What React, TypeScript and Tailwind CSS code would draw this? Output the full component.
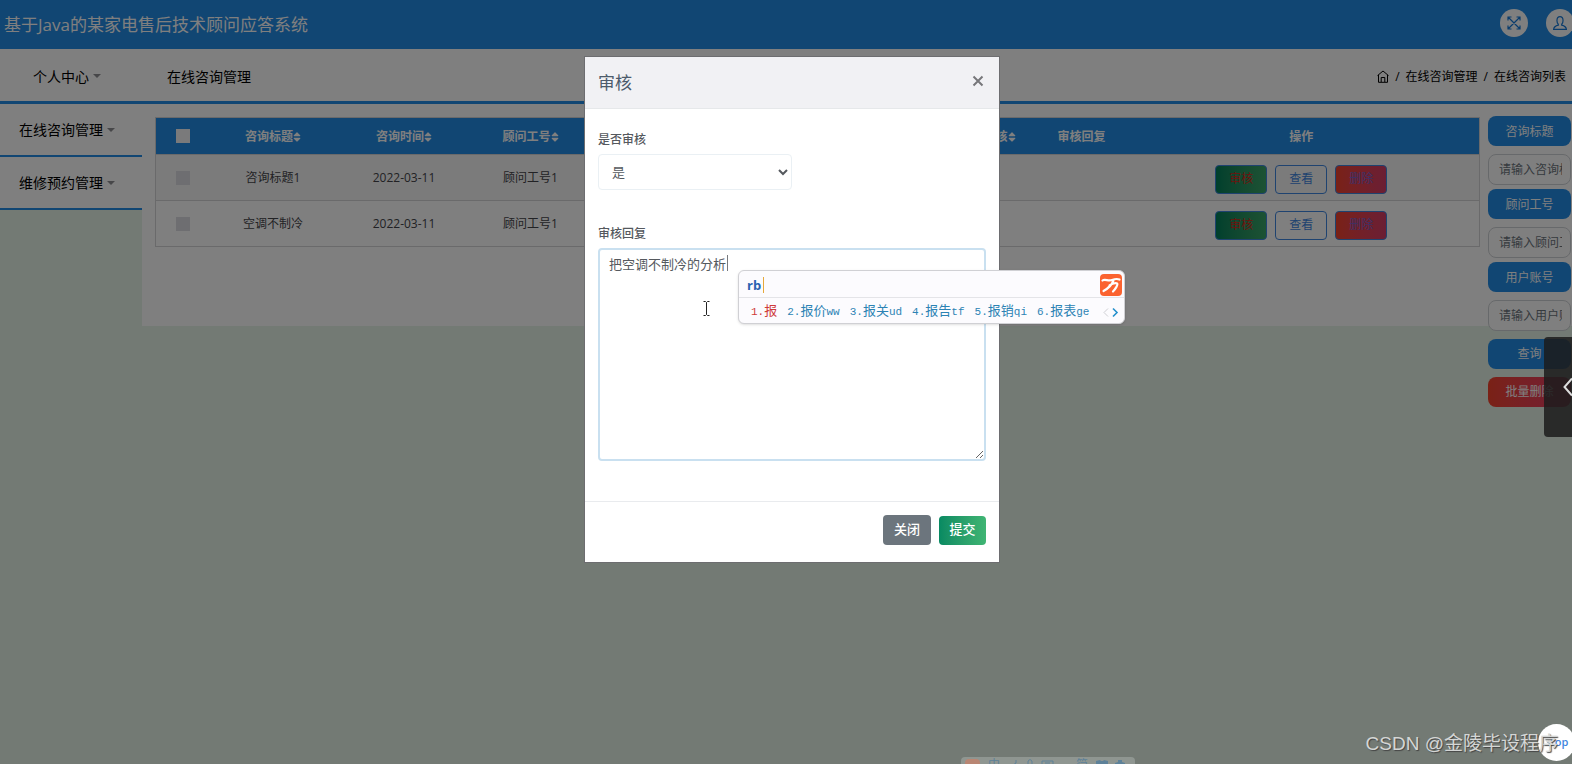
import { useState } from "react";
import { FaSort } from "react-icons/fa";

const MENU = ["在线咨询管理", "维修预约管理"];

const FILTERS = [
  { label: "咨询标题", placeholder: "请输入咨询标题" },
  { label: "顾问工号", placeholder: "请输入顾问工号" },
  { label: "用户账号", placeholder: "请输入用户账号" },
];

const ROWS = [
  { title: "咨询标题1", time: "2022-03-11", advisor: "顾问工号1" },
  { title: "空调不制冷", time: "2022-03-11", advisor: "顾问工号1" },
];

const CANDIDATES = [
  { word: "报", code: "" },
  { word: "报价", code: "ww" },
  { word: "报关", code: "ud" },
  { word: "报告", code: "tf" },
  { word: "报销", code: "qi" },
  { word: "报表", code: "ge" },
];

function Caret() {
  return (
    <span className="inline-block border-x-4 border-t-4 border-x-transparent border-t-[#8f8f93]" />
  );
}

function SortHeader({ children }: { children: string }) {
  return (
    <th className="pt-[2px] font-bold">
      <span className="inline-flex items-center">
        {children}
        <FaSort size={12} className="-mx-[2px]" />
      </span>
    </th>
  );
}

function ExpandIcon() {
  return (
    <svg width="14" height="14" viewBox="0 0 14 14" fill="none" stroke="currentColor" strokeWidth="1.200">
      <path d="M1 4.500V1h3.500M9.500 1H13v3.500M13 9.500V13H9.500M4.500 13H1V9.500M1 1l12 12M13 1L1 13" />
    </svg>
  );
}

function UserIcon() {
  return (
    <svg width="14" height="14" viewBox="0 0 14 14" fill="none" stroke="currentColor" strokeWidth="1.200">
      <path d="M5.300 8.200C4.200 7.300 3.900 5.600 4 4c.1-2 1.300-3.400 3-3.400S9.900 2 10 4c.1 1.600-.2 3.300-1.300 4.200v1c2.400.6 4.400 1.400 4.700 4.100H.6c.3-2.700 2.300-3.500 4.700-4.100z" />
    </svg>
  );
}

function HomeIcon() {
  return (
    <svg width="12" height="13" viewBox="0 0 12 13" fill="none" stroke="currentColor">
      <path d="M.5 5.600L6 1l5.500 4.600M1.500 5v7.300h9V5M4.200 12V7.500h3.600V12" />
    </svg>
  );
}

function ImeBar() {
  return (
    <div className="absolute bottom-0 left-[961px] flex h-[7px] w-[174px] items-start overflow-hidden rounded-t bg-[#8f9691] px-1 pt-px text-[12px] leading-[14px] text-[#5d8199]">
      <span className="mt-px h-3 w-[15px] rounded-sm bg-[#b98673]" />
      <span className="ml-2">中</span>
      <svg className="ml-3" width="44" height="8" viewBox="0 0 44 8" fill="none" stroke="currentColor">
        <path d="M4 2v3L1 7M16 7V4c0-3 4-3 4 0v3M30 8V3h11v5M33 5h5" />
      </svg>
      <span className="ml-5">简</span>
      <svg className="ml-2" width="32" height="8" viewBox="0 0 32 8" fill="currentColor">
        <path d="M0 3l4-1 1 1h2l1-1 4 1v5H0zM19 5l3-1V2h4v2l3 1v3H19z" />
      </svg>
    </div>
  );
}

function ImePopup() {
  return (
    <div className="absolute top-[270px] left-[738px] z-30 w-[387px] rounded-md border border-[#d0d0d4] bg-[#fcfbfe] shadow">
      <div className="flex h-[27px] items-center border-b border-[#e4e4e8] pt-[2px] pr-[2px] pl-2">
        <span className="border-r border-[#e6a93c] pr-[2px] text-[13px] leading-4 font-bold text-[#2a62b0]">rb</span>
        <svg className="ml-auto" width="22" height="22" viewBox="0 0 22 22">
          <rect width="22" height="22" rx="4" fill="#fb6330" />
          <path
            d="M2.500 6.500C5 4.500 8 7.500 12 6s5-1.500 7.500-.5M13.500 6.500C12 10.500 8 14.500 3.500 17M9.500 11.500c2-1.500 6-3 7.500-2s-2 6-4 8"
            fill="none"
            stroke="#fff"
            strokeWidth="2.200"
            strokeLinecap="round"
          />
        </svg>
      </div>
      <div className="flex h-[25px] items-center pt-[3px] pr-[5px] pl-3 font-['Liberation_Mono','Noto_Sans_CJK_SC',monospace] text-[11px] text-[#2c83b4]">
        <div className="flex gap-[10px]">
          {CANDIDATES.map((c, i) => (
            <span key={c.word} className={i === 0 ? "text-[#cf3a3a]" : ""}>
              {i + 1}.<span className="text-[13px]">{c.word}</span>
              {c.code}
            </span>
          ))}
        </div>
        <svg className="ml-auto" width="17" height="11" viewBox="0 0 17 11" fill="none">
          <path d="M6 1.500L2 5.500l4 4" stroke="#cfcfd4" />
          <path d="M11 1.500l4 4-4 4" stroke="#2490cc" strokeWidth="1.600" />
        </svg>
      </div>
    </div>
  );
}

function AuditModal() {
  const [status, setStatus] = useState("是");
  const [reply, setReply] = useState("把空调不制冷的分析");

  return (
    <div className="absolute inset-0 z-20 bg-black/50 pt-14 pl-3">
      <div role="dialog" aria-labelledby="audit-title" className="mx-auto w-[416px] border border-[#6d6d70] bg-white">
        <div className="flex h-[52px] items-center justify-between border-b border-[#e6e8ea] bg-[#f1f1f4] px-[13px]">
          <h5 id="audit-title" className="text-[17px] text-[#4d5b6b]">审核</h5>
          <button aria-label="Close" className="p-[2px] pb-[6px] text-[#77777a]">
            <svg width="12" height="12" viewBox="0 0 12 12" stroke="currentColor" strokeWidth="2">
              <path d="M1.500 1.500l9 9M10.500 1.500l-9 9" />
            </svg>
          </button>
        </div>

        <div className="px-[13px] pt-[21px] pb-10 text-[#55595e]">
          <label htmlFor="status" className="block text-[12px] leading-5 font-medium">是否审核</label>
          <select
            id="status"
            value={status}
            onChange={(e) => setStatus(e.target.value)}
            className="mt-1 block h-9 w-[194px] rounded-sm border border-[#eaf0f4] bg-white px-[9px] text-[13px]"
          >
            <option>是</option>
            <option>否</option>
          </select>
          <label htmlFor="reply" className="mt-[34px] block text-[12px] leading-5 font-medium">审核回复</label>
          <div className="relative mt-1">
            <textarea
              id="reply"
              value={reply}
              onChange={(e) => setReply(e.target.value)}
              className="block h-[213px] w-full resize rounded-sm border-2 border-[#c9e0f0] px-[9px] py-1 text-[13px] leading-5 outline-none"
            />
            <span className="absolute top-[7px] left-[129px] h-4 w-px bg-[#77797d]" />
          </div>
        </div>

        <div className="flex items-center justify-end gap-2 border-t border-[#e9ebee] px-[13px] pt-[13px] pb-[17px] text-[13px] text-white">
          <button className="h-[30px] w-12 rounded-sm bg-[#6c757d] font-medium">关闭</button>
          <button className="h-[29px] w-[47px] rounded-sm bg-linear-to-r from-[#078a62] to-[#3fb573] font-medium">提交</button>
        </div>
      </div>
    </div>
  );
}

export default function App() {
  return (
    <div className="relative flex min-h-screen flex-col overflow-hidden bg-[#e6f4e8] font-['Open_Sans','Noto_Sans_CJK_SC',sans-serif] text-black">
      <header className="flex h-[49px] items-center justify-between bg-[#228ce6] pl-1 text-white">
        <h1 className="text-[17px]">基于Java的某家电售后技术顾问应答系统</h1>
        <div className="-mr-[2px] flex gap-[18px] pb-[3px] text-[#1478d8]">
          <button aria-label="全屏" className="flex h-7 w-7 items-center justify-center rounded-full bg-white">
            <ExpandIcon />
          </button>
          <button aria-label="用户" className="flex h-7 w-7 items-center justify-center rounded-full bg-white">
            <UserIcon />
          </button>
        </div>
      </header>

      <nav className="flex h-[55px] items-center border-b-3 border-[#228ce6] bg-white pt-[2px] text-[14px]">
        <button className="flex w-[142px] items-center gap-1 pl-[33px]">
          个人中心
          <Caret />
        </button>
        <span className="pl-[25px]">在线咨询管理</span>
        <ol className="ml-auto flex items-center gap-[6px] pt-px pr-[6px] text-[12px]">
          <li><a href="#home" aria-label="首页"><HomeIcon /></a></li>
          <li>/</li>
          <li><a href="#manage">在线咨询管理</a></li>
          <li>/</li>
          <li>在线咨询列表</li>
        </ol>
      </nav>

      <div className="flex items-start">
        <aside className="w-[142px] shrink-0 text-[14px]">
          {MENU.map((item) => (
            <button
              key={item}
              className="flex h-[53px] w-full items-center gap-1 border-b-2 border-[#228ce6] bg-white pl-[19px]"
            >
              {item}
              <Caret />
            </button>
          ))}
        </aside>

        <main className="flex min-w-0 grow items-start gap-2 bg-white pt-3 pr-px pb-[79px] pl-[13px]">
          <table className="mt-px grow table-fixed border-collapse border border-[#d4d4d6] text-center text-[12px] text-[#45454a]">
            <colgroup>
              <col className="w-[55px]" />
              <col className="w-[125px]" />
              <col className="w-[137px]" />
              <col className="w-[116px]" />
              <col />
              <col className="w-[104px]" />
              <col className="w-[84px]" />
              <col className="w-[356px]" />
            </colgroup>
            <thead className="bg-[#228ce6] text-white">
              <tr className="h-[37px]">
                <th>
                  <input type="checkbox" aria-label="全选" className="mx-auto block h-[14px] w-[14px] appearance-none bg-[#f4f4f6]" />
                </th>
                <SortHeader>咨询标题</SortHeader>
                <SortHeader>咨询时间</SortHeader>
                <SortHeader>顾问工号</SortHeader>
                <th />
                <SortHeader>是否审核</SortHeader>
                <th className="pt-[2px]">审核回复</th>
                <th className="pt-[2px]">操作</th>
              </tr>
            </thead>
            <tbody>
              {ROWS.map((row) => (
                <tr key={row.title} className="h-[46px] border-t border-[#d4d4d6] odd:bg-[#f7f7f7]">
                  <td>
                    <input type="checkbox" aria-label={row.title} className="mx-auto block h-[14px] w-[14px] appearance-none bg-[#dcdce2]" />
                  </td>
                  <td>{row.title}</td>
                  <td>{row.time}</td>
                  <td>{row.advisor}</td>
                  <td />
                  <td />
                  <td />
                  <td>
                    <div className="flex justify-center gap-2 pt-[3px]">
                      <button className="h-[29px] w-[52px] rounded border border-[#3f86e0] bg-linear-to-r from-[#00805a] to-[#3aa568] text-[#d42a1c]">审核</button>
                      <button className="h-[29px] w-[52px] rounded border border-[#3f86e0] text-[#3f86e0]">查看</button>
                      <button className="h-[29px] w-[52px] rounded border border-[#3f86e0] bg-linear-to-r from-[#f4432c] to-[#d63d68] text-[#7a62cc]">删除</button>
                    </div>
                  </td>
                </tr>
              ))}
            </tbody>
          </table>

          <form className="-mb-44 flex w-[83px] shrink-0 flex-col text-[12px]">
            {FILTERS.map((f) => (
              <div key={f.label} className="mb-1 flex flex-col gap-2">
                <label htmlFor={f.label} className="h-[30px] rounded-lg bg-[#228ce6] text-center leading-[31px] text-white">
                  {f.label}
                </label>
                <input
                  id={f.label}
                  placeholder={f.placeholder}
                  className="h-[31px] w-full rounded-lg border border-[#cfd2d6] bg-white pr-2 pl-[10px] placeholder:text-[#6c757d]"
                />
              </div>
            ))}
            <button type="button" className="mt-1 h-[30px] rounded-lg bg-[#228ce6] text-white">查询</button>
            <button type="button" className="mt-2 h-[30px] rounded-lg bg-linear-to-r from-[#f4432c] to-[#e63d68] text-white">批量删除</button>
          </form>
        </main>
      </div>

      <AuditModal />

      <svg className="absolute top-[301px] left-[702px] z-30" width="9" height="15" viewBox="0 0 9 15" fill="none" stroke="#222">
        <path d="M1.500 .5h2l1 1 1-1h2M1.500 14.500h2l1-1 1 1h2M4.500 1.500v12" />
      </svg>
      <ImePopup />

      <button
        aria-label="展开"
        className="absolute top-[337px] right-0 z-30 flex h-[100px] w-7 items-center justify-end rounded-l bg-[#1c1c1c]/85"
      >
        <svg width="9" height="20" viewBox="0 0 9 20" fill="none" stroke="#ddd" strokeWidth="2">
          <path d="M9 1.500L1.500 10 9 18.500" />
        </svg>
      </button>

      <div className="absolute inset-x-0 bottom-0 z-30 h-10">
        <ImeBar />
        <button className="absolute -right-[3px] bottom-[3px] h-[37px] w-[37px] rounded-full bg-white pl-1 text-[11px] font-semibold text-[#3f86e0]">
          Top
        </button>
        <span className="absolute right-[14px] bottom-1 font-['Liberation_Sans','Noto_Sans_CJK_SC',sans-serif] text-[19px] leading-8 whitespace-nowrap text-[#d4d6d5] [text-shadow:1px_1px_1px_#444]">
          CSDN @金陵毕设程序
        </span>
      </div>
    </div>
  );
}
